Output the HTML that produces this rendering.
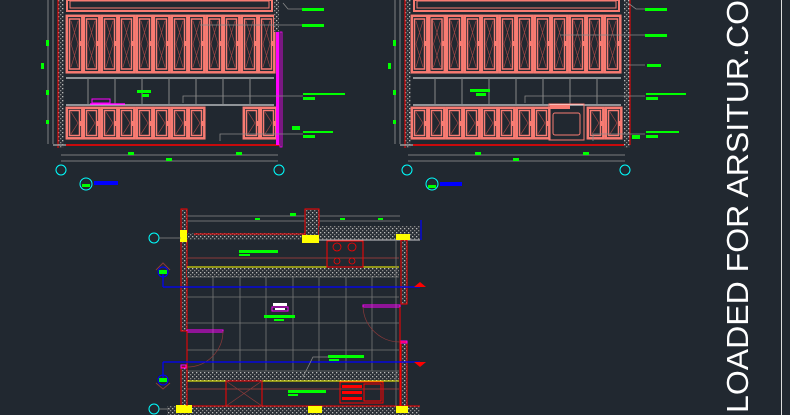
<!DOCTYPE html>
<html><head><meta charset="utf-8"><style>
html,body{margin:0;padding:0;background:#212830;width:790px;height:415px;overflow:hidden}
svg{display:block}
</style></head><body>
<svg width="790" height="415" viewBox="0 0 790 415" xmlns="http://www.w3.org/2000/svg">
<defs>
<pattern id="h" width="4" height="4" patternUnits="userSpaceOnUse"><rect width="4" height="4" fill="#2a2f36"/><rect x="0" y="0" width="1.3" height="1.3" fill="#bbb"/><rect x="2" y="2" width="1.3" height="1.3" fill="#888"/></pattern>
<g id="ud"><rect x="0.8" y="0.8" width="15.5" height="56.5" fill="none" stroke="#f87b72" stroke-width="2.5"/><rect x="3.5" y="4" width="10" height="50" fill="none" stroke="#f87b72" stroke-width="1.5"/><path d="M5 6 L12 29 L5 52 M12 6 L5 29 L12 52" stroke="#9a4545" stroke-width="0.7" fill="none"/><rect x="13.5" y="26" width="3.5" height="5" fill="#f87b72"/></g>
<g id="ld"><rect x="0.8" y="0.8" width="15.5" height="30.5" fill="none" stroke="#f87b72" stroke-width="2.5"/><rect x="3.5" y="3.5" width="10" height="25" fill="none" stroke="#f87b72" stroke-width="1.5"/><path d="M5 5 L12 16 L5 27" stroke="#9a4545" stroke-width="0.7" fill="none"/><rect x="13.5" y="14" width="3.5" height="5" fill="#f87b72"/></g>
<g id="elev">
<rect x="0" y="0" width="6" height="148" fill="url(#h)"/>
<line x1="0" y1="0" x2="0" y2="148" stroke="#f00" stroke-width="1"/>
<rect x="9" y="0" width="205" height="11" fill="none" stroke="#f87b72" stroke-width="2"/>
<rect x="12" y="1" width="199" height="7" fill="none" stroke="#f87b72" stroke-width="1"/>
<line x1="8" y1="78" x2="216" y2="78" stroke="#fff" stroke-width="1"/>
<line x1="8" y1="105" x2="216" y2="105" stroke="#fff" stroke-width="1"/>
<g stroke="#888" stroke-width="1"><line x1="30" y1="78" x2="30" y2="104"/><line x1="57" y1="78" x2="57" y2="104"/><line x1="84" y1="78" x2="84" y2="104"/><line x1="111" y1="78" x2="111" y2="104"/><line x1="138" y1="78" x2="138" y2="104"/><line x1="165" y1="78" x2="165" y2="104"/><line x1="192" y1="78" x2="192" y2="104"/></g>
<line x1="8" y1="145" x2="222" y2="145" stroke="#f00" stroke-width="1.5"/>
<line x1="-5" y1="145" x2="8" y2="145" stroke="#999" stroke-width="1.5"/>
<line x1="-5" y1="0" x2="-5" y2="144" stroke="#999" stroke-width="0.8"/>
<line x1="-10" y1="0" x2="-10" y2="144" stroke="#999" stroke-width="0.8"/>
<g fill="#0f0"><rect x="-12" y="40" width="3" height="6"/><rect x="-12" y="90" width="3" height="5"/><rect x="-12" y="120" width="3" height="4"/><rect x="-17" y="63" width="3" height="6"/></g>
<line x1="3" y1="155" x2="220" y2="155" stroke="#999" stroke-width="0.8"/>
<line x1="3" y1="161" x2="220" y2="161" stroke="#999" stroke-width="0.8"/>
<g fill="#0f0"><rect x="70" y="152" width="6" height="3"/><rect x="108" y="158" width="6" height="3"/><rect x="178" y="152" width="6" height="3"/></g>
</g>
</defs>

<use href="#elev" x="58" y="0"/>
<rect x="65" y="14" width="210" height="59" fill="#212830"/>
<g transform="translate(66,15)"><use href="#ud" x="0"/><use href="#ud" x="17"/><use href="#ud" x="35"/><use href="#ud" x="52"/><use href="#ud" x="70"/><use href="#ud" x="87"/><use href="#ud" x="105"/><use href="#ud" x="122"/><use href="#ud" x="140"/><use href="#ud" x="157"/><use href="#ud" x="175"/><use href="#ud" x="192"/></g>
<g transform="translate(66,107)"><use href="#ld" x="0"/><use href="#ld" x="17"/><use href="#ld" x="35"/><use href="#ld" x="52"/><use href="#ld" x="70"/><use href="#ld" x="87"/><use href="#ld" x="105"/><use href="#ld" x="122"/><use href="#ld" x="177"/><use href="#ld" x="194"/></g>
<rect x="274" y="0" width="5" height="32" fill="url(#h)"/>
<rect x="276" y="32" width="3" height="113" fill="#f0f"/>
<rect x="280" y="32" width="2" height="115" fill="none" stroke="#f0f" stroke-width="0.8"/>
<line x1="90" y1="104" x2="125" y2="104" stroke="#f0f" stroke-width="1.5"/>
<rect x="92" y="99" width="18" height="4" fill="none" stroke="#f0f" stroke-width="1"/>
<g fill="#0f0"><rect x="137" y="90" width="14" height="3"/><rect x="142" y="94" width="7" height="3"/><rect x="302" y="8" width="22" height="3"/><rect x="302" y="24" width="22" height="3"/><rect x="303" y="93" width="42" height="2"/><rect x="303" y="97" width="12" height="3"/><rect x="303" y="131" width="30" height="2"/><rect x="303" y="135" width="12" height="3"/><rect x="292" y="126" width="8" height="4"/></g>
<g stroke="#888" stroke-width="0.8" fill="none"><path d="M283 3 L288 9 L302 9"/><path d="M200 25 L302 25"/><path d="M183 103 L183 96 L303 96"/><path d="M220 141 L220 134 L303 134"/></g>
<g stroke="#0ff" stroke-width="1" fill="none"><circle cx="61" cy="170" r="5"/><circle cx="279" cy="170" r="5"/><circle cx="86" cy="184" r="6"/></g>
<rect x="94" y="181" width="24" height="4" fill="#00f"/><rect x="82" y="184" width="8" height="3" fill="#0f0"/>

<use href="#elev" x="405" y="0"/>
<rect x="410" y="14" width="214" height="59" fill="#212830"/>
<g transform="translate(411,15)"><use href="#ud" x="0"/><use href="#ud" x="17.5"/><use href="#ud" x="35"/><use href="#ud" x="53"/><use href="#ud" x="70"/><use href="#ud" x="88"/><use href="#ud" x="105"/><use href="#ud" x="123"/><use href="#ud" x="140"/><use href="#ud" x="158"/><use href="#ud" x="175"/><use href="#ud" x="193"/></g>
<g transform="translate(411,107)"><use href="#ld" x="0"/><use href="#ld" x="17"/><use href="#ld" x="35"/><use href="#ld" x="52"/><use href="#ld" x="70"/><use href="#ld" x="87"/><use href="#ld" x="105"/><use href="#ld" x="122"/><use href="#ld" x="176"/><use href="#ld" x="194"/></g>
<rect x="549" y="104" width="35" height="36" fill="none" stroke="#f87b72" stroke-width="1"/>
<rect x="553" y="113" width="27" height="22" rx="2" fill="none" stroke="#f87b72" stroke-width="1"/>
<rect x="550" y="105" width="20" height="4" fill="#f87b72"/>
<rect x="624" y="0" width="6" height="148" fill="url(#h)"/>
<line x1="630" y1="0" x2="630" y2="145" stroke="#f00"/>
<g fill="#0f0"><rect x="645" y="8" width="22" height="3"/><rect x="645" y="34" width="22" height="3"/><rect x="647" y="64" width="14" height="3"/><rect x="646" y="93" width="40" height="2"/><rect x="646" y="97" width="12" height="3"/><rect x="646" y="131" width="33" height="2"/><rect x="646" y="135" width="12" height="3"/><rect x="632" y="135" width="8" height="4"/><rect x="470" y="89" width="20" height="3"/><rect x="476" y="93" width="10" height="3"/></g>
<g stroke="#888" stroke-width="0.8" fill="none"><path d="M628 3 L636 9 L645 9"/><path d="M560 35 L645 35"/><path d="M625 65 L645 65"/><path d="M525 103 L525 96 L645 96"/><path d="M593 141 L593 134 L645 134"/></g>
<g stroke="#0ff" stroke-width="1" fill="none"><circle cx="407" cy="170" r="5"/><circle cx="625" cy="170" r="5"/><circle cx="432" cy="184" r="6"/></g>
<rect x="440" y="182" width="22" height="4" fill="#00f"/><rect x="428" y="185" width="8" height="3" fill="#0f0"/>

<g stroke="#888" stroke-width="0.8"><line x1="187" y1="216" x2="400" y2="216"/><line x1="187" y1="221" x2="400" y2="221"/></g>
<g fill="#0f0"><rect x="290" y="213" width="6" height="3"/><rect x="255" y="218" width="5" height="2"/><rect x="340" y="218" width="5" height="2"/><rect x="378" y="218" width="5" height="2"/></g>
<rect x="181" y="209" width="6" height="122" fill="url(#h)" stroke="#f00" stroke-width="1"/>
<rect x="187" y="233" width="118" height="7" fill="url(#h)"/>
<line x1="194" y1="234" x2="305" y2="234" stroke="#f00"/>
<rect x="305" y="209" width="14" height="31" fill="url(#h)" stroke="#f00" stroke-width="1"/>
<rect x="319" y="226" width="101" height="14" fill="url(#h)"/>
<line x1="319" y1="240" x2="420" y2="240" stroke="#fff" stroke-width="0.8"/>
<rect x="401" y="240" width="6" height="64" fill="url(#h)" stroke="#f00"/>
<rect x="401" y="342" width="6" height="66" fill="url(#h)" stroke="#f00"/>
<rect x="181" y="367" width="6" height="41" fill="url(#h)" stroke="#f00"/>
<rect x="167" y="406" width="253" height="9" fill="url(#h)"/>
<line x1="184" y1="406" x2="420" y2="406" stroke="#f00"/>
<g fill="#ff0"><rect x="180" y="230" width="7" height="12"/><rect x="302" y="235" width="17" height="8"/><rect x="396" y="234" width="14" height="6"/><rect x="176" y="405" width="16" height="8"/><rect x="308" y="406" width="14" height="7"/><rect x="396" y="406" width="12" height="7"/></g>
<rect x="187" y="268" width="212" height="9" fill="url(#h)"/>
<line x1="187" y1="267" x2="399" y2="267" stroke="#ff0" stroke-width="1"/>
<rect x="187" y="372" width="212" height="9" fill="url(#h)"/>
<line x1="187" y1="381" x2="399" y2="381" stroke="#ff0" stroke-width="1"/>
<line x1="187" y1="258" x2="399" y2="258" stroke="#8a3a3a"/>
<line x1="187" y1="389" x2="399" y2="389" stroke="#8a3a3a"/>
<g stroke="#777" stroke-width="0.8"><line x1="187" y1="277" x2="399" y2="277"/><line x1="187" y1="297" x2="399" y2="297"/><line x1="187" y1="323" x2="399" y2="323"/><line x1="187" y1="350" x2="399" y2="350"/><line x1="187" y1="371" x2="399" y2="371"/><line x1="213" y1="277" x2="213" y2="371"/><line x1="240" y1="277" x2="240" y2="371"/><line x1="266" y1="277" x2="266" y2="371"/><line x1="293" y1="277" x2="293" y2="371"/><line x1="319" y1="277" x2="319" y2="371"/><line x1="346" y1="277" x2="346" y2="371"/><line x1="372" y1="277" x2="372" y2="371"/><line x1="396" y1="240" x2="396" y2="406"/></g>
<rect x="327" y="241" width="36" height="26" fill="none" stroke="#f00"/>
<g stroke="#f00" fill="none" stroke-width="0.8"><circle cx="337" cy="247" r="4"/><circle cx="352" cy="247" r="4"/><circle cx="337" cy="261" r="3"/><circle cx="352" cy="261" r="3"/></g>
<rect x="226" y="381" width="36" height="25" fill="none" stroke="#f00"/>
<path d="M226 381 L262 406 M262 381 L226 406" stroke="#8a3a3a" stroke-width="0.7"/>
<rect x="340" y="382" width="43" height="21" fill="none" stroke="#f00"/>
<g fill="#f00"><rect x="342" y="385" width="20" height="3"/><rect x="342" y="391" width="20" height="3"/><rect x="342" y="397" width="20" height="3"/></g>
<rect x="364" y="384" width="17" height="17" fill="none" stroke="#f00"/>
<g stroke="#f0f" fill="none" stroke-width="1"><rect x="187" y="330" width="36" height="2"/><rect x="363" y="305" width="37" height="2"/><rect x="181" y="365" width="5" height="3"/><rect x="400" y="341" width="7" height="2"/></g>
<g stroke="#8a3a3a" fill="none" stroke-width="0.7"><path d="M223 331 A36 36 0 0 1 187 367"/><path d="M363 307 A37 37 0 0 0 400 342"/></g>
<line x1="187" y1="331" x2="187" y2="406" stroke="#f00"/>
<line x1="400" y1="307" x2="400" y2="406" stroke="#f00"/>
<g stroke="#00f" stroke-width="1.2"><line x1="163" y1="287" x2="420" y2="287"/><line x1="163" y1="362" x2="420" y2="362"/><line x1="163" y1="272" x2="163" y2="287"/><line x1="163" y1="362" x2="163" y2="378"/><line x1="421" y1="220" x2="421" y2="240"/></g>
<path d="M414 287 L420 282 L426 287 Z" fill="#f00"/>
<path d="M414 362 L420 367 L426 362 Z" fill="#f00"/>
<g><circle cx="163" cy="272" r="5" fill="none" stroke="#00f"/><rect x="159" y="270" width="8" height="4" fill="#0f0"/><path d="M156 270 L163 263 L170 270" stroke="#8a3a3a" fill="none"/></g>
<g><circle cx="163" cy="380" r="5" fill="none" stroke="#00f"/><rect x="159" y="378" width="8" height="4" fill="#0f0"/><path d="M156 383 L163 389 L170 383" stroke="#8a3a3a" fill="none"/></g>
<g stroke="#0ff" fill="none"><circle cx="154" cy="238" r="5"/><circle cx="154" cy="409" r="5"/></g>
<line x1="159" y1="238" x2="181" y2="238" stroke="#888" stroke-width="0.8"/>
<line x1="159" y1="409" x2="170" y2="409" stroke="#888" stroke-width="0.8"/>
<g fill="#0f0"><rect x="239" y="250" width="39" height="3"/><rect x="239" y="254" width="11" height="2"/><rect x="264" y="315" width="31" height="3"/><rect x="274" y="319" width="10" height="2"/><rect x="328" y="355" width="36" height="3"/><rect x="329" y="359" width="10" height="2"/><rect x="288" y="390" width="38" height="3"/><rect x="288" y="394" width="10" height="2"/></g>
<rect x="273" y="303" width="14" height="3" fill="#fff"/>
<rect x="272" y="307" width="16" height="4" fill="none" stroke="#f0f"/>
<rect x="275" y="308" width="10" height="2" fill="#fff"/>
<path d="M303 377 L313 357 L329 357" stroke="#888" fill="none" stroke-width="0.8"/>

<text transform="translate(748,413) rotate(-90)" font-family="Liberation Sans, sans-serif" font-size="31" fill="#fff" textLength="413" lengthAdjust="spacingAndGlyphs">LOADED FOR ARSITUR.CO</text>
<line x1="781.5" y1="0" x2="781.5" y2="415" stroke="#ddd" stroke-width="1"/>
</svg>
</body></html>
